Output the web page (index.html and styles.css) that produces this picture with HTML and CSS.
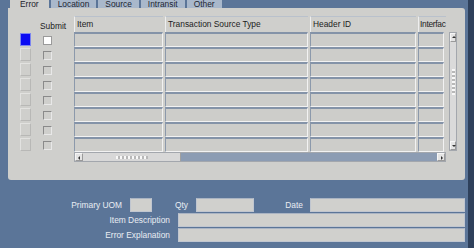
FILE: index.html
```html
<!DOCTYPE html>
<html lang="en">
<head>
    <meta charset="UTF-8">
    <title>Pending Transactions</title>
    <link rel="stylesheet" href="styles.css">
</head>
<body>
    <div class="window">
        <div class="tabs">
            <div class="tab active">Error</div>
            <div class="tab">Location</div>
            <div class="tab">Source</div>
            <div class="tab">Intransit</div>
            <div class="tab">Other</div>
        </div>

        <div class="panel">
            <div class="grid">
                <div class="hd"></div>
                <div class="hd submit">Submit</div>
                <div class="hd cell-head">Item</div>
                <div class="hd cell-head">Transaction Source Type</div>
                <div class="hd cell-head">Header ID</div>
                <div class="hd cell-head last">Interfac</div>
                <div class="vscroll">
                    <div class="sbtn up"></div>
                    <div class="vthumb"><span class="grip v"></span></div>
                    <div class="sbtn down"></div>
                </div>

                <!-- 8 record rows -->
                <div class="mark current"></div><div class="chk"><span class="box on"></span></div>
                <div class="cell"></div><div class="cell"></div><div class="cell"></div><div class="cell last"></div>

                <div class="mark"></div><div class="chk"><span class="box"></span></div>
                <div class="cell"></div><div class="cell"></div><div class="cell"></div><div class="cell last"></div>

                <div class="mark"></div><div class="chk"><span class="box"></span></div>
                <div class="cell"></div><div class="cell"></div><div class="cell"></div><div class="cell last"></div>

                <div class="mark"></div><div class="chk"><span class="box"></span></div>
                <div class="cell"></div><div class="cell"></div><div class="cell"></div><div class="cell last"></div>

                <div class="mark"></div><div class="chk"><span class="box"></span></div>
                <div class="cell"></div><div class="cell"></div><div class="cell"></div><div class="cell last"></div>

                <div class="mark"></div><div class="chk"><span class="box"></span></div>
                <div class="cell"></div><div class="cell"></div><div class="cell"></div><div class="cell last"></div>

                <div class="mark"></div><div class="chk"><span class="box"></span></div>
                <div class="cell"></div><div class="cell"></div><div class="cell"></div><div class="cell last"></div>

                <div class="mark"></div><div class="chk"><span class="box"></span></div>
                <div class="cell"></div><div class="cell"></div><div class="cell"></div><div class="cell last"></div>

                <div class="hscroll">
                    <div class="sbtn left"></div>
                    <div class="hthumb"><span class="grip h"></span></div>
                    <div class="htrack"></div>
                    <div class="sbtn right"></div>
                </div>
            </div>
        </div>

        <div class="details">
            <div class="drow">
                <span class="lbl uom">Primary UOM</span>
                <span class="field f-uom"></span>
                <span class="lbl qty">Qty</span>
                <span class="field f-qty"></span>
                <span class="lbl date">Date</span>
                <span class="field f-date"></span>
            </div>
            <div class="drow">
                <span class="lbl wide">Item Description</span>
                <span class="field f-long"></span>
            </div>
            <div class="drow">
                <span class="lbl wide">Error Explanation</span>
                <span class="field f-long"></span>
            </div>
        </div>
    </div>
</body>
</html>
```

FILE: styles.css
```css
body {
    margin: 0;
    width: 474px;
    height: 248px;
    overflow: hidden;
    background: #2e405b;
    font-family: 'Liberation Sans', Arial, sans-serif;
    font-size: 8.4px;
}

.window {
    width: 468px;
    height: 248px;
    background: #5b7598;
    overflow: hidden;
}

/* tabs, cut off at the top of the shot */
.tabs {
    display: flex;
    height: 8px;
    padding-left: 10px;
    overflow: hidden;
}

.tab {
    margin-top: -7px;
    height: 15px;
    line-height: 22px;
    padding: 0 7px;
    margin-right: 2px;
    background: #a9b8cb;
    color: #1f2630;
    border-radius: 3px 3px 0 0;
}

.tab.active {
    background: #cfcfcc;
    padding: 0 10px;
}

.panel {
    margin-left: 8px;
    width: 457px;
    height: 172px;
    box-sizing: border-box;
    padding: 8px 0 0 12px;
    background: #cfcfcc;
    border-radius: 0 3px 3px 3px;
}

.grid {
    display: grid;
    grid-template-columns: 12px 42px 91px 145px 108px 28px 11px;
    grid-template-rows: 16px repeat(8, 15px) 10px;
}

.hd {
    color: #1c1c1c;
    white-space: nowrap;
}

.submit {
    padding: 5px 0 0 8px;
}

.cell-head {
    margin-right: 2px;
    padding: 2px 0 0 2px;
    border-top: 1px solid #b9c1cc;
    border-left: 1px solid #eeeeee;
    box-sizing: border-box;
}

.hd.last {
    padding-left: 1px;
    letter-spacing: -0.3px;
}

.last {
    margin-right: 0;
}

.mark {
    grid-column: 1;
    margin: 1px 1px 1px 0;
    border: 1px solid #e2e2e0;
    border-right-color: #b8b8b6;
    border-bottom-color: #b8b8b6;
}

.mark.current {
    background: #0b0bf2;
    border-color: #7d86f0;
}

.chk {
    padding: 4px 0 0 11px;
}

.box {
    display: block;
    width: 7px;
    height: 7px;
    border: 1px solid #8a8a8a;
    border-right-color: #e8e8e8;
    border-bottom-color: #e8e8e8;
    background: #cfcfcc;
}

.box.on {
    background: #ffffff;
    border-color: #9a9a9a;
}

.cell {
    margin-right: 2px;
    box-sizing: border-box;
    background: #cdcdca;
    border-top: 2px solid #8493a8;
    border-left: 1px solid #8c99ab;
    border-bottom: 1px solid #f2f2f2;
    border-right: 1px solid #f2f2f2;
}

/* scrollbars */
.vscroll {
    grid-column: 7;
    grid-row: 2 / 10;
    margin: 0 0 1px 3px;
    display: flex;
    flex-direction: column;
    background: #dadada;
    border: 1px solid #a3a7ad;
    box-sizing: border-box;
}

.hscroll {
    grid-column: 3 / 7;
    grid-row: 10;
    display: flex;
    border: 1px solid #a3a7ad;
    box-sizing: border-box;
    background: #dadada;
}

.sbtn {
    position: relative;
    flex: none;
    width: 8px;
    height: 8px;
    background: #e4e4e4;
    border: 1px solid #f6f6f6;
    border-right-color: #9a9a9a;
    border-bottom-color: #9a9a9a;
    box-sizing: border-box;
}

.vscroll .sbtn {
    width: 6px;
    height: 9px;
}

.sbtn::after {
    content: '';
    position: absolute;
    left: 1px;
    top: 2px;
    border: 2px solid transparent;
}

.sbtn.up::after { border-bottom-color: #333; top: 0px; }
.sbtn.down::after { border-top-color: #333; top: 3px; }
.sbtn.left::after { border-right-color: #333; left: 0; top: 2px; }
.sbtn.right::after { border-left-color: #333; left: 3px; top: 2px; }

.vscroll .sbtn.down { margin-top: auto; }

.vthumb {
    flex: 1;
    display: flex;
    align-items: center;
    justify-content: center;
    padding-bottom: 20px;
}

.hthumb {
    width: 97px;
    display: flex;
    align-items: center;
    justify-content: center;
    background: #d8d8d8;
    border-right: 1px solid #a0a0a0;
}

.grip.h {
    width: 32px;
    height: 3px;
    background: repeating-linear-gradient(90deg, #f8f8f8 0 2px, #b8b8b8 2px 4px);
}

.grip.v {
    width: 3px;
    height: 26px;
    background: repeating-linear-gradient(180deg, #f8f8f8 0 2px, #b8b8b8 2px 4px);
}

.htrack {
    flex: 1;
    background: #8c9cb3;
}

/* lower detail fields */
.details {
    padding-top: 18px;
    display: flex;
    flex-direction: column;
    gap: 1px;
}

.drow {
    display: flex;
    align-items: center;
    height: 14px;
}

.lbl {
    color: #e9edf3;
    text-align: right;
    flex: none;
}

.lbl.uom { width: 122px; margin-right: 8px; }
.lbl.qty { margin: 0 8px 0 23px; width: 13px; }
.lbl.date { margin: 0 7px 0 31px; width: 18px; }
.lbl.wide { width: 170px; margin-right: 8px; }

.field {
    flex: none;
    height: 14px;
    box-sizing: border-box;
    background: #d0d0cd;
    border: 1px solid #c0c6d0;
    border-top-color: #aab4c3;
}

.f-uom { width: 22px; }
.f-qty { width: 58px; }
.f-date { width: 155px; }
.f-long { width: 287px; }
```
